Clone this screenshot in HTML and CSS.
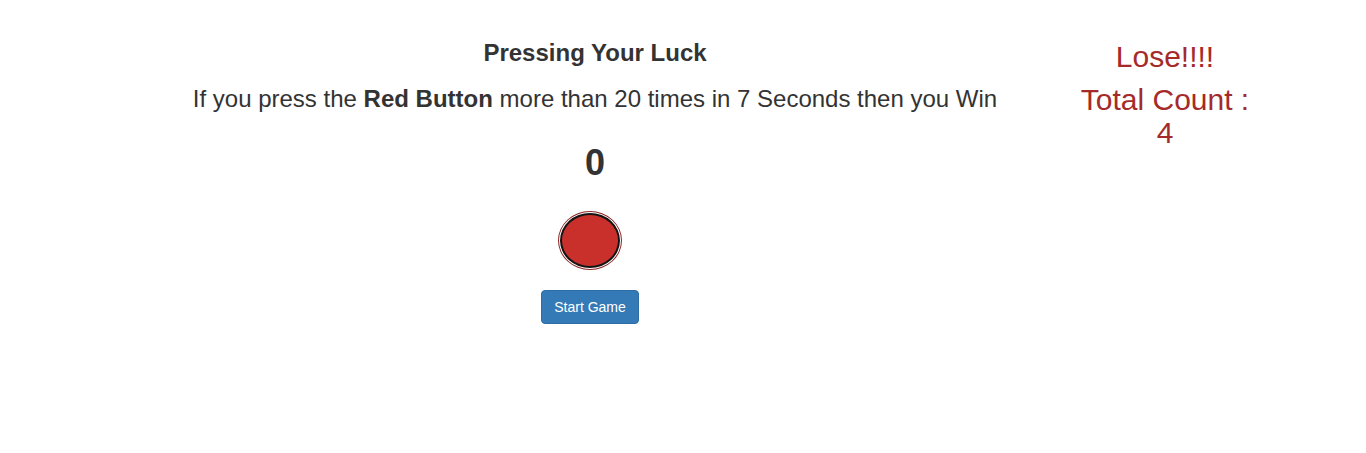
FILE: index.html
```html
<!DOCTYPE html>
<html>
<head>
<meta charset="utf-8">
<title>Pressing Your Luck</title>
<link rel="stylesheet" href="styles.css">
</head>
<body>
<div class="page">
  <main class="game">
    <h3 class="title">Pressing Your Luck</h3>
    <h4 class="rules">If you press the <b>Red Button</b> more than 20 times in 7 Seconds then you Win</h4>
    <h1 class="count">0</h1>
    <button class="red-btn" type="button"><span class="red-core"></span></button>
    <button class="start-btn" type="button">Start Game</button>
  </main>
  <aside class="result">
    <h2 class="result-line">Lose!!!!</h2>
    <h2 class="result-line">Total Count : 4</h2>
  </aside>
</div>
</body>
</html>
```

FILE: styles.css
```css
html, body {
  margin: 0;
  padding: 0;
  background: #fff;
}

body {
  font-family: "Liberation Sans", Arial, Helvetica, sans-serif;
  color: #333;
}

.page {
  display: flex;
  align-items: flex-start;
}

.game {
  margin-left: 110px;
  width: 970px;
  padding-top: 40px;
  display: flex;
  flex-direction: column;
  align-items: center;
  text-align: center;
}

.title {
  margin: 0;
  font-size: 24px;
  font-weight: bold;
  line-height: 26.4px;
}

.rules {
  margin: 19.4px 0 0;
  font-size: 24px;
  font-weight: normal;
  line-height: 26.4px;
}

.rules b {
  font-weight: bold;
}

.count {
  margin: 31px 0 0;
  font-size: 36px;
  font-weight: bold;
  line-height: 39.6px;
}

.red-btn {
  margin: 28px 10px 0 0;
  width: 64px;
  height: 59px;
  box-sizing: border-box;
  padding: 1px;
  border: 1px solid #8e2424;
  border-radius: 50%;
  background: #fff;
  display: block;
  cursor: pointer;
}

.red-core {
  display: block;
  width: 100%;
  height: 100%;
  box-sizing: border-box;
  border: 2.5px solid #141414;
  border-radius: 50%;
  background: #c9302c;
}

.start-btn {
  margin: 20px 10px 0 0;
  padding: 6px 12px;
  font-family: "Liberation Sans", Arial, Helvetica, sans-serif;
  font-size: 14px;
  line-height: 20px;
  color: #fff;
  background: #337ab7;
  border: 1px solid #2e6da4;
  border-radius: 4px;
  cursor: pointer;
}

.result {
  width: 170px;
  padding-top: 40px;
  text-align: center;
  color: #a52a2a;
}

.result-line {
  margin: 0 0 10px;
  font-size: 30px;
  font-weight: normal;
  line-height: 33px;
}
```
